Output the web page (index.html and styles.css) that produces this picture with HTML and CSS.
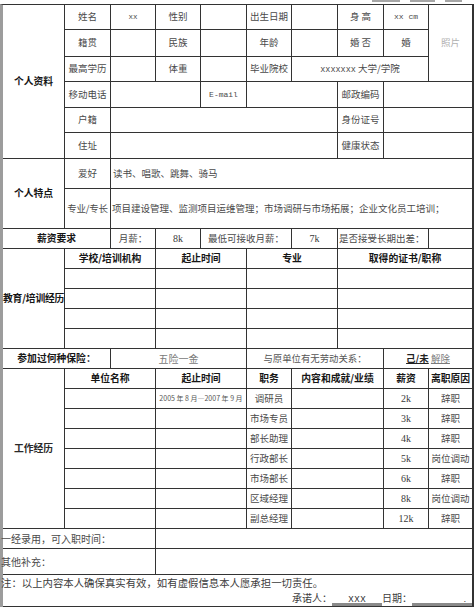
FILE: index.html
```html
<!DOCTYPE html>
<html lang="zh-CN">
<head>
<meta charset="utf-8">
<title>个人简历</title>
<link rel="stylesheet" href="styles.css">
</head>
<body>
<div class="page">
  <div class="topstrip"><span class="tbar b1"></span><span class="tbar b2"></span><span class="tbar b3"></span></div>
  <table class="form">
    <colgroup>
      <col class="w62"><col class="w46"><col class="w45"><col class="w45"><col class="w46">
      <col class="w45"><col class="w46"><col class="w46"><col class="w45"><col class="w44">
    </colgroup>
    <tbody>
      <tr class="h25">
        <td rowspan="6" class="b">个人资料</td>
        <td>姓名</td><td class="mono s75">xx</td><td>性别</td><td></td>
        <td>出生日期</td><td></td><td>身 高</td><td class="mono">xx cm</td>
        <td rowspan="3" class="photo">照片</td>
      </tr>
      <tr class="h27">
        <td>籍贯</td><td></td><td>民族</td><td></td>
        <td>年龄</td><td></td><td>婚 否</td><td>婚</td>
      </tr>
      <tr class="h25">
        <td>最高学历</td><td></td><td>体重</td><td></td>
        <td>毕业院校</td><td colspan="3"><span class="mono s85">xxxxxxx</span> 大学/学院</td>
      </tr>
      <tr class="h26">
        <td>移动电话</td><td colspan="2"></td><td class="mono">E-mail</td>
        <td colspan="2"></td><td>邮政编码</td><td colspan="2"></td>
      </tr>
      <tr class="h25">
        <td>户籍</td><td colspan="5"></td><td>身份证号</td><td colspan="2"></td>
      </tr>
      <tr class="h26">
        <td>住址</td><td colspan="5"></td><td>健康状态</td><td colspan="2"></td>
      </tr>

      <tr class="h30">
        <td rowspan="2" class="b">个人特点</td>
        <td>爱好</td><td colspan="8" class="left p2">读书、唱歌、跳舞、骑马</td>
      </tr>
      <tr class="h40">
        <td class="tight">专业/专长</td><td colspan="8" class="left p1">项目建设管理、监测项目运维管理；市场调研与市场拓展；企业文化员工培训；</td>
      </tr>

      <tr class="h20">
        <td colspan="2" class="b">薪资要求</td>
        <td>月薪：</td><td class="num">8k</td><td colspan="2">最低可接收月薪：</td>
        <td class="num">7k</td><td colspan="2" class="left p1">是否接受长期出差：</td><td></td>
      </tr>

      <tr class="h20">
        <td rowspan="5" class="b tight">教育/培训经历</td>
        <td colspan="2" class="b">学校/培训机构</td><td colspan="2" class="b">起止时间</td>
        <td colspan="2" class="b">专业</td><td colspan="3" class="b">取得的证书/职称</td>
      </tr>
      <tr class="h20"><td colspan="2"></td><td colspan="2"></td><td colspan="2"></td><td colspan="3"></td></tr>
      <tr class="h20"><td colspan="2"></td><td colspan="2"></td><td colspan="2"></td><td colspan="3"></td></tr>
      <tr class="h20"><td colspan="2"></td><td colspan="2"></td><td colspan="2"></td><td colspan="3"></td></tr>
      <tr class="h20"><td colspan="2"></td><td colspan="2"></td><td colspan="2"></td><td colspan="3"></td></tr>

      <tr class="h20">
        <td colspan="2" class="b">参加过何种保险：</td>
        <td colspan="3" class="soft">五险一金</td>
        <td colspan="3" class="mid">与原单位有无劳动关系：</td>
        <td colspan="2" class="rel"><span class="ul strong">己/未</span> <span class="ul soft">解除</span></td>
      </tr>

      <tr class="h20">
        <td rowspan="8" class="b semi">工作经历</td>
        <td colspan="2" class="b">单位名称</td><td colspan="2" class="b">起止时间</td>
        <td class="b">职务</td><td colspan="2" class="b">内容和成就/业绩</td>
        <td class="b">薪资</td><td class="b">离职原因</td>
      </tr>
      <tr class="h20"><td colspan="2"></td><td colspan="2" class="date">2005 年 8 月—2007 年 9 月</td><td>调研员</td><td colspan="2"></td><td class="num">2k</td><td>辞职</td></tr>
      <tr class="h20"><td colspan="2"></td><td colspan="2"></td><td>市场专员</td><td colspan="2"></td><td class="num">3k</td><td>辞职</td></tr>
      <tr class="h20"><td colspan="2"></td><td colspan="2"></td><td>部长助理</td><td colspan="2"></td><td class="num">4k</td><td>辞职</td></tr>
      <tr class="h20"><td colspan="2"></td><td colspan="2"></td><td>行政部长</td><td colspan="2"></td><td class="num">5k</td><td>岗位调动</td></tr>
      <tr class="h20"><td colspan="2"></td><td colspan="2"></td><td>市场部长</td><td colspan="2"></td><td class="num">6k</td><td>辞职</td></tr>
      <tr class="h20"><td colspan="2"></td><td colspan="2"></td><td>区域经理</td><td colspan="2"></td><td class="num">8k</td><td>岗位调动</td></tr>
      <tr class="h20"><td colspan="2"></td><td colspan="2"></td><td>副总经理</td><td colspan="2"></td><td class="num">12k</td><td>辞职</td></tr>

      <tr class="h20">
        <td colspan="3" class="left edge">一经录用，可入职时间：</td><td colspan="7"></td>
      </tr>
      <tr class="h26">
        <td colspan="3" class="left edge">其他补充：</td><td colspan="7"></td>
      </tr>
      <tr class="h31">
        <td colspan="10" class="note">
          <div class="note-line">注：以上内容本人确保真实有效，如有虚假信息本人愿承担一切责任。</div>
          <div class="sign-line">
            <span>承诺人：</span>
            <span class="field f1"><span class="mono s10">xxx</span></span>
            <span>日期：</span>
            <span class="field f2"><span class="dot">.</span></span>
          </div>
        </td>
      </tr>
    </tbody>
  </table>
</div>
</body>
</html>
```

FILE: styles.css
```css
html, body {
  margin: 0;
  padding: 0;
  background: #ffffff;
}

.page {
  width: 474px;
  font-family: "Noto Sans CJK SC", "Noto Sans", sans-serif;
  color: #4a4a4a;
}

.topstrip {
  display: flex;
  justify-content: flex-end;
  gap: 10px;
  padding-right: 12px;
  height: 4px;
}

.tbar {
  display: block;
  height: 2px;
  background: #a6a6a6;
}

.b1 { width: 28px; }
.b2 { width: 25px; }
.b3 { width: 17px; }

.form {
  border-collapse: separate;
  border-spacing: 0;
  table-layout: fixed;
  width: 474px;
  border-top: 1px solid #333;
  border-left: 3px solid #9c9c9c;
  border-right: 1px solid #333;
  border-bottom: 1px solid #333;
}

.w62 { width: 62px; }
.w46 { width: 46px; }
.w45 { width: 45px; }
.w44 { width: 44px; }

.form td {
  box-sizing: border-box;
  border-right: 1px solid #333;
  border-bottom: 1px solid #333;
  padding: 0;
  font-size: 9.5px;
  line-height: 1.2;
  text-align: center;
  vertical-align: middle;
  white-space: nowrap;
  overflow: visible;
}

.h20 { height: 20px; }
.h25 { height: 25px; }
.h26 { height: 26px; }
.h27 { height: 27px; }
.h30 { height: 30px; }
.h31 { height: 31px; }
.h40 { height: 40px; }

.form td.b {
  font-weight: 700;
  color: #161616;
  font-size: 9.8px;
}

.form td.semi {
  color: #2a2a2a;
}

.form td.left { text-align: left; }
.form td.p1 { padding-left: 1px; }
.form td.p2 { padding-left: 2px; }
.form td.tight { letter-spacing: -0.2px; }

.form td.edge {
  font-size: 10px;
  text-indent: -2px;
}

.mono {
  font-family: "Liberation Mono", "DejaVu Sans Mono", monospace;
  font-size: 8px;
}

.form td.mono { font-size: 8px; }
.form td.s75, .s75 { font-size: 7.5px; }
.s85 { font-size: 8.5px; }
.s10 { font-size: 10px; }

.form td.num {
  font-family: "Liberation Serif", "DejaVu Serif", serif;
  font-size: 10px;
  color: #3a3a3a;
}

.form td.photo {
  color: #b0b0b0;
  font-size: 9.5px;
}

.form td.date {
  font-size: 7px;
  color: #555;
}

.soft { color: #7a7a7a; }
.form td.soft { font-size: 10px; }
.form td.mid { color: #555; font-size: 9.4px; }

.ul { text-decoration: underline; }
.strong { font-weight: 700; color: #222; }

.form td.note {
  text-align: left;
  vertical-align: top;
  padding-top: 1px;
  font-size: 10.4px;
  line-height: 13px;
  color: #3c3c3c;
}

.note-line {
  height: 13px;
  text-indent: -2px;
}

.sign-line {
  display: flex;
  justify-content: flex-end;
  align-items: flex-start;
  height: 17px;
  font-size: 10px;
  line-height: 17px;
}

.field {
  display: inline-block;
  box-sizing: border-box;
  height: 17px;
  border-bottom: 3px solid #8a8a8a;
  text-align: center;
  line-height: 17px;
}

.f1 { width: 50px; }
.f2 { width: 60px; text-align: right; padding-right: 6px; }

.dot { font-size: 8px; }
```
